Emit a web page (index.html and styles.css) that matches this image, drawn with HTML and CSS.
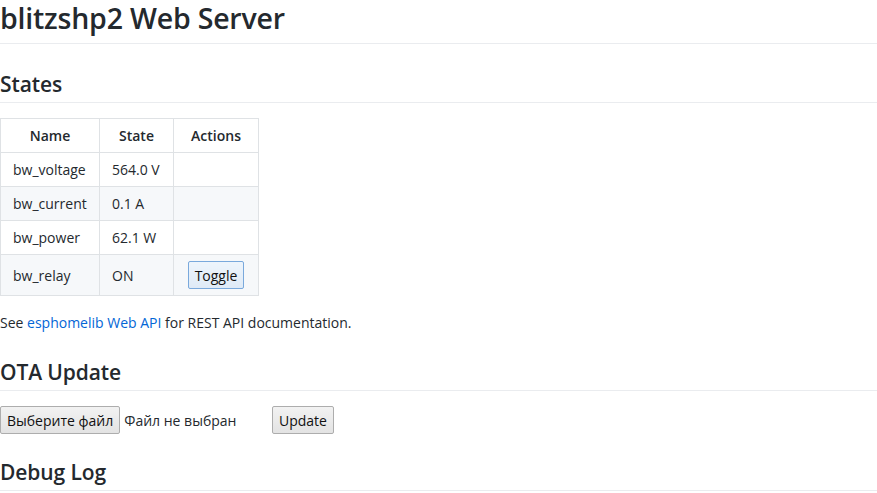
FILE: index.html
```html
<!DOCTYPE html>
<html lang="ru">
<head>
<meta charset="utf-8">
<title>blitzshp2 Web Server</title>
<link rel="stylesheet" href="styles.css">
</head>
<body>
<main class="page">
  <h1 class="title">blitzshp2 Web Server</h1>
  <h2 class="section states-title">States</h2>
  <table class="states">
    <thead>
      <tr><th class="c-name">Name</th><th class="c-state">State</th><th class="c-actions">Actions</th></tr>
    </thead>
    <tbody>
      <tr><td>bw_voltage</td><td>564.0 V</td><td></td></tr>
      <tr class="alt"><td>bw_current</td><td>0.1 A</td><td></td></tr>
      <tr><td>bw_power</td><td>62.1 W</td><td></td></tr>
      <tr class="alt last"><td>bw_relay</td><td>ON</td><td class="act"><button class="btn btn-focus">Toggle</button></td></tr>
    </tbody>
  </table>
  <p class="note">See <a href="#">esphomelib Web API</a> for REST API documentation.</p>
  <h2 class="section ota-title">OTA Update</h2>
  <form class="ota">
    <div class="file">
      <button type="button" class="btn">Выберите файл</button>
      <span class="file-label">Файл не выбран</span>
    </div>
    <button type="button" class="btn">Update</button>
  </form>
  <h2 class="section debug-title">Debug Log</h2>
</main>
</body>
</html>
```
FILE: styles.css
```css
html, body {
  margin: 0;
  padding: 0;
  background: #ffffff;
}
body {
  font-family: "Open Sans", "Noto Sans", "Liberation Sans", sans-serif;
  color: #24292e;
  font-size: 14px;
}
.page {
  display: flex;
  flex-direction: column;
  align-items: flex-start;
}
.title {
  align-self: stretch;
  margin: 0;
  height: 43px;
  line-height: 36px;
  font-size: 28.5px;
  font-weight: 600;
  letter-spacing: -0.2px;
  border-bottom: 1px solid #eaecef;
  box-sizing: content-box;
}
.section {
  align-self: stretch;
  margin: 0;
  font-size: 21px;
  font-weight: 600;
  border-bottom: 1px solid #eaecef;
  letter-spacing: -0.1px;
}
.states-title {
  margin-top: 24px;
  height: 34px;
  line-height: 32px;
}
.states {
  margin-top: 15px;
  border-collapse: collapse;
  table-layout: fixed;
  width: 258px;
  font-size: 14px;
}
.states th, .states td {
  border: 1px solid #dfe2e5;
  padding: 0 0 0 12px;
  height: 34px;
  box-sizing: border-box;
  text-align: left;
  white-space: nowrap;
}
.states th {
  font-weight: 600;
  text-align: center;
  padding: 0;
}
.states tr.alt td {
  background: #f6f8fa;
}
.states tr.last td {
  height: 41px;
}
.c-name { width: 99px; }
.c-state { width: 74px; }
.c-actions { width: 85px; }
.states td.act { text-align: center; padding: 0; }
.btn {
  font-family: "Open Sans", "Noto Sans", "Liberation Sans", sans-serif;
  font-size: 14px;
  color: #111;
  height: 28px;
  padding: 0 6px;
  border: 1px solid #adadad;
  border-radius: 2px;
  background: linear-gradient(#f2f2f2, #e3e3e3);
}
.btn-focus {
  border-color: #7aa9dc;
  background: linear-gradient(#eef5fc, #dfeaf6);
}
.note {
  margin: 17px 0 0;
  line-height: 20px;
}
.note a {
  color: #0366d6;
  text-decoration: none;
}
.ota-title {
  margin-top: 23px;
  height: 34px;
  line-height: 32px;
}
.ota {
  margin-top: 15px;
  display: flex;
  align-items: center;
}
.file {
  width: 272px;
  display: flex;
  align-items: center;
  gap: 4px;
}
.file-label {
  font-size: 14px;
}
.debug-title {
  margin-top: 22px;
  height: 34px;
  line-height: 32px;
}
```
